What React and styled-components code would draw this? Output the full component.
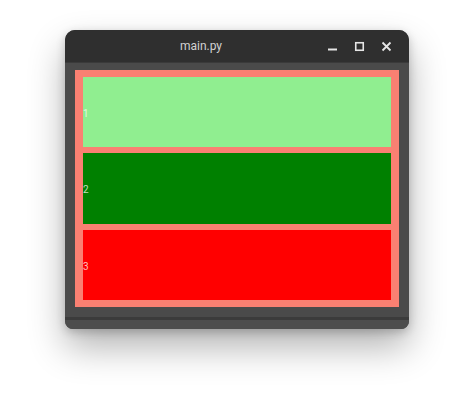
import React from "react";
import styled, { createGlobalStyle } from "styled-components";

const GlobalStyle = createGlobalStyle`
  html, body {
    margin: 0;
    padding: 0;
    background: #ffffff;
    font-family: Roboto, "Noto Sans", sans-serif;
  }
`;

const Page = styled.div`
  width: 474px;
  height: 402px;
  padding: 30px 0 0 65px;
  box-sizing: border-box;
`;

const Window = styled.div`
  width: 344px;
  height: 299px;
  display: flex;
  flex-direction: column;
  border-radius: 10px 10px 8px 8px;
  overflow: hidden;
  background: #4a4a4a;
  box-shadow: 0 18px 36px rgba(0, 0, 0, 0.3), 0 3px 10px rgba(0, 0, 0, 0.2);
`;

const TitleBar = styled.div`
  height: 32px;
  flex: none;
  display: flex;
  align-items: center;
  background: #2f2f2f;
  border-bottom: 1px solid #3a3a3a;
`;

const Title = styled.div`
  flex: 1;
  padding-left: 18px;
  text-align: center;
  color: #d2d2d2;
  font-size: 12px;
`;

const Controls = styled.div`
  display: flex;
  padding-right: 9px;
`;

const ControlButton = styled.div`
  width: 27px;
  height: 32px;
  display: flex;
  align-items: center;
  justify-content: center;
`;

const Content = styled.div`
  flex: 1;
  padding: 7px 10px 10px 10px;
  background: #4a4a4a;
`;

const Frame = styled.div`
  height: 100%;
  box-sizing: border-box;
  padding: 7px 8px 7px 8px;
  background: #fa8072;
  display: flex;
  flex-direction: column;
  gap: 6px;
`;

const Panel = styled.div`
  flex: 1;
  display: flex;
  align-items: center;
  padding-top: 3px;
  background: ${(p) => p.$color};
  color: rgba(255, 255, 255, 0.75);
  font-size: 10px;
`;

const StatusLine = styled.div`
  height: 3px;
  flex: none;
  background: #3b3b3b;
`;

const StatusBar = styled.div`
  height: 9px;
  flex: none;
  background: #4d4d4d;
`;

const panels = [
  { label: "1", color: "#90ee90" },
  { label: "2", color: "#008000" },
  { label: "3", color: "#ff0000" },
];

export default function App() {
  return (
    <>
      <GlobalStyle />
      <Page>
        <Window>
          <TitleBar>
            <Title>main.py</Title>
            <Controls>
              <ControlButton>
                <svg width="11" height="11" viewBox="0 0 11 11">
                  <path d="M1 8.5 H10" stroke="#e6e6e6" strokeWidth="2" />
                </svg>
              </ControlButton>
              <ControlButton>
                <svg width="11" height="11" viewBox="0 0 11 11">
                  <rect x="1.75" y="1.75" width="7.5" height="7.5" fill="none" stroke="#e6e6e6" strokeWidth="1.6" />
                </svg>
              </ControlButton>
              <ControlButton>
                <svg width="11" height="11" viewBox="0 0 11 11">
                  <path d="M1.5 1.5 L9.5 9.5 M9.5 1.5 L1.5 9.5" stroke="#e6e6e6" strokeWidth="1.8" />
                </svg>
              </ControlButton>
            </Controls>
          </TitleBar>
          <Content>
            <Frame>
              {panels.map((p) => (
                <Panel key={p.label} $color={p.color}>
                  {p.label}
                </Panel>
              ))}
            </Frame>
          </Content>
          <StatusLine />
          <StatusBar />
        </Window>
      </Page>
    </>
  );
}
